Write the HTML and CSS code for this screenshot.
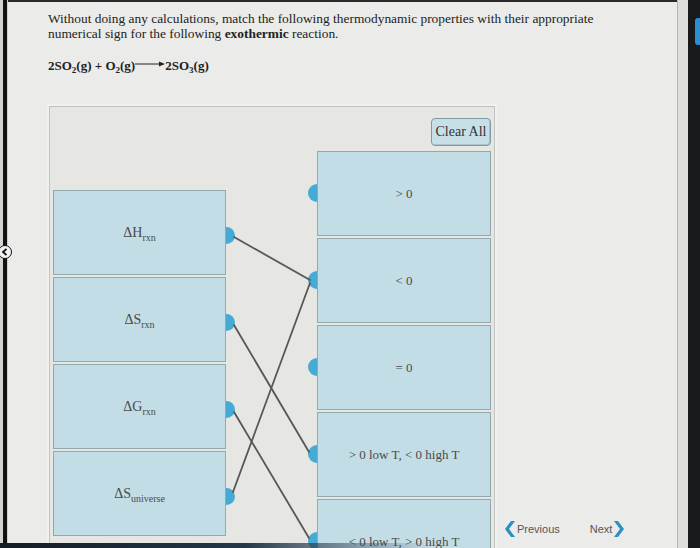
FILE: index.html
```html
<!DOCTYPE html>
<html>
<head>
<meta charset="utf-8">
<link rel="stylesheet" href="styles.css">
</head>
<body>
<div class="screen">
  <div class="bezel-left">
    <span class="back-btn"><svg width="8" height="8" viewBox="0 0 8 8"><polyline points="5.5,1 2,4 5.5,7" fill="none" stroke="#111" stroke-width="1.8"/></svg></span>
  </div>
  <div class="page">
    <p class="question">Without doing any calculations, match the following thermodynamic properties with their appropriate<br>numerical sign for the following <b>exothermic</b> reaction.</p>
    <p class="equation">2SO<sub>2</sub>(g) + O<sub>2</sub>(g)<svg class="arrow" viewBox="0 0 30 8"><line x1="0" y1="4" x2="27" y2="4" stroke="#222" stroke-width="1"/><polygon points="30,4 24,1.5 24,6.5" fill="#222"/></svg>2SO<sub>3</sub>(g)</p>
    <div class="work">
      <div class="panel">
        <div class="col col-left">
          <div class="box src"><span>ΔH<sub>rxn</sub></span></div>
          <div class="box src"><span>ΔS<sub>rxn</sub></span></div>
          <div class="box src"><span>ΔG<sub>rxn</sub></span></div>
          <div class="box src"><span>ΔS<sub>universe</sub></span></div>
        </div>
        <div class="col col-right">
          <button class="clear">Clear All</button>
          <div class="box dst">&gt; 0</div>
          <div class="box dst">&lt; 0</div>
          <div class="box dst">= 0</div>
          <div class="box dst">&gt; 0 low T, &lt; 0 high T</div>
          <div class="box dst">&lt; 0 low T, &gt; 0 high T</div>
        </div>
      </div>
      <div class="nav">
        <span class="nav-item"><svg class="chev" viewBox="0 0 10 16"><polygon points="10,0 4,8 10,16 6,16 0,8 6,0" fill="#2b8fc4"/></svg>Previous</span>
        <span class="nav-item">Next<svg class="chev" viewBox="0 0 10 16"><polygon points="0,0 6,8 0,16 4,16 10,8 4,0" fill="#2b8fc4"/></svg></span>
      </div>
    </div>
  </div>
  <div class="edge"></div>
  <div class="bezel-right"><span class="blue-tab"></span></div>
  <svg class="wires" width="700" height="548" viewBox="0 0 700 548">
    <g stroke="#575757" stroke-width="1.8" stroke-linecap="round">
      <line x1="234" y1="237" x2="310" y2="280"/>
      <line x1="234" y1="325" x2="309" y2="452"/>
      <line x1="234" y1="412" x2="309" y2="538"/>
      <line x1="233" y1="492" x2="310" y2="283"/>
    </g>
  </svg>
  <div class="bezel-bottom"></div>
</div>
</body>
</html>
```

FILE: styles.css
```css
body {
  margin: 0;
}

.screen {
  position: relative;
  width: 700px;
  height: 548px;
  overflow: hidden;
  display: flex;
  background: #ebebe9;
  font-family: "Liberation Serif", "Times New Roman", serif;
}

.bezel-left {
  flex: 0 0 8px;
  position: relative;
  background: linear-gradient(to right, #d4d4d2 0 3px, #121212 3px 7px, #cfcfcd 7px);
}

.back-btn {
  position: absolute;
  left: -2px;
  top: 245px;
  width: 14px;
  height: 14px;
  box-sizing: border-box;
  border: 1.5px solid #111;
  border-radius: 50%;
  background: #f2f2f2;
  display: flex;
  align-items: center;
  justify-content: center;
}

.page {
  flex: 1;
  min-width: 0;
  border-top: 2px solid #2a2a2a;
  padding-left: 40px;
  background: #ebebe9;
}

.question {
  margin: 0;
  padding-top: 9px;
  font-size: 13.4px;
  line-height: 15px;
  color: #222;
}

.equation {
  margin: 17px 0 0;
  font-family: "Liberation Serif", "Times New Roman", serif;
  font-size: 13px;
  line-height: 16px;
  font-weight: bold;
  color: #222;
}

.equation sub {
  font-size: 9px;
  line-height: 0;
  vertical-align: -3px;
}

.arrow {
  width: 30px;
  height: 8px;
  vertical-align: 2px;
}

.work {
  display: flex;
  align-items: flex-start;
  margin-top: 32px;
}

.panel {
  flex: 0 0 auto;
  margin-left: 1px;
  border: 1px solid #c2c2c0;
  background: #e6e6e3;
  padding: 11px 3px 0;
  display: flex;
  gap: 91px;
  box-shadow: 0 0 0 2px #f1f1ef;
}

.col {
  display: flex;
  flex-direction: column;
  gap: 2px;
  width: 173px;
}

.col-left {
  margin-top: 72px;
}

.col-right {
  width: 174px;
}

.clear {
  align-self: flex-end;
  width: 60px;
  height: 28px;
  margin: 0 0 3px;
  padding: 0;
  border: 1px solid #7f9ba4;
  border-radius: 4px;
  background: #c7e0e8;
  box-shadow: inset -1px -1px 0 #a9c3cb;
  font-family: "Liberation Serif", "Times New Roman", serif;
  font-size: 14px;
  color: #333;
}

.box {
  position: relative;
  height: 85px;
  box-sizing: border-box;
  border: 1px solid #93a9b0;
  background: #c3dde6;
  display: flex;
  align-items: center;
  justify-content: center;
  font-size: 13px;
  color: #4a4a4a;
}

.src {
  font-size: 14px;
}

.box sub {
  font-size: 10px;
  line-height: 0;
  vertical-align: -4px;
}

.src::after {
  content: "";
  position: absolute;
  right: -10px;
  top: 36px;
  width: 9px;
  height: 17px;
  border-radius: 0 9px 9px 0;
  background: #45abd4;
}

.dst::before {
  content: "";
  position: absolute;
  left: -10px;
  top: 32px;
  width: 9px;
  height: 18px;
  border-radius: 9px 0 0 9px;
  background: #45abd4;
}

.nav {
  display: flex;
  gap: 30px;
  margin-top: 415px;
  margin-left: 10px;
  font-family: "Liberation Sans", Arial, sans-serif;
  font-size: 11px;
  color: #555;
}

.nav-item {
  display: flex;
  align-items: center;
  gap: 2px;
}

.chev {
  width: 10px;
  height: 16px;
}

.edge {
  flex: 0 0 11px;
  box-sizing: border-box;
  border-left: 1px solid #b4b4b2;
  background: #dededc;
}

.bezel-right {
  flex: 0 0 12px;
  position: relative;
  background: #17191b;
}

.blue-tab {
  position: absolute;
  right: 0;
  top: 18px;
  width: 5px;
  height: 27px;
  border-radius: 3px 0 0 3px;
  background: #2a8fd0;
}

.wires {
  position: absolute;
  left: 0;
  top: 0;
  pointer-events: none;
}

.bezel-bottom {
  position: absolute;
  left: 0;
  right: 0;
  bottom: 0;
  height: 5px;
  background: linear-gradient(to right, #141c24 0%, #23384a 35%, rgba(60, 90, 110, 0) 62%);
}
```
